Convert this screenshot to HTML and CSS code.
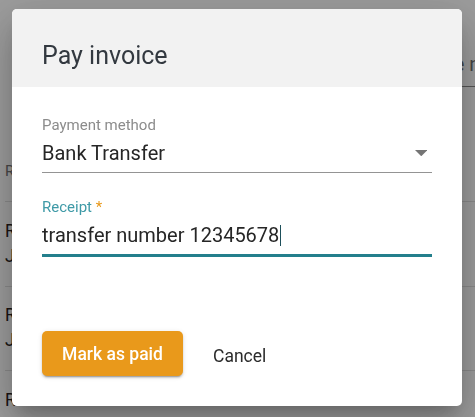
FILE: index.html
```html
<!DOCTYPE html>
<html lang="en">
<head>
<meta charset="utf-8">
<title>Pay invoice</title>
<link rel="stylesheet" href="styles.css">
</head>
<body>
<div class="page">
  <div class="toolbar">
    <div class="search">Invoice number</div>
  </div>
  <div class="table">
    <div class="thead">Reference</div>
    <div class="row">
      <div>R-2024-0012</div>
      <div>Jane Cooper</div>
    </div>
    <div class="row">
      <div>R-2024-0013</div>
      <div>John Miller</div>
    </div>
    <div class="row">
      <div>R-2024-0014</div>
    </div>
  </div>
</div>

<div class="backdrop">
  <div class="dialog" role="dialog" aria-labelledby="dlg-title">
    <div class="dialog-header">
      <h2 class="dialog-title" id="dlg-title">Pay invoice</h2>
    </div>
    <div class="dialog-body">
      <div class="field">
        <div class="field-label">Payment method</div>
        <div class="select">
          <span class="value">Bank Transfer</span>
          <svg class="arrow" viewBox="7 10 10 5" aria-hidden="true"><path d="M7 10l5 5 5-5z"/></svg>
        </div>
      </div>
      <div class="field">
        <div class="field-label focused">Receipt <span class="req">*</span></div>
        <div class="input"><span class="value">transfer number 12345678</span><span class="caret"></span></div>
      </div>
    </div>
    <div class="dialog-actions">
      <button class="btn btn-primary" type="button">Mark as paid</button>
      <button class="btn btn-text" type="button">Cancel</button>
    </div>
  </div>
</div>
</body>
</html>
```

FILE: styles.css
```css
html, body {
  margin: 0;
  height: 100%;
  overflow: hidden;
  background: #ffffff;
  font-family: Roboto, "Liberation Sans", Arial, sans-serif;
}

.page {
  padding-left: 5px;
}

.toolbar {
  padding: 52px 0 0 396px;
}

.search {
  font-size: 20px;
  line-height: 24px;
  color: #6f6f6f;
  white-space: nowrap;
  overflow: hidden;
  padding-bottom: 10px;
  border-bottom: 1px solid #8a8a8a;
}

.table {
  margin-top: 75px;
}

.thead {
  font-size: 15px;
  line-height: 18px;
  color: #757575;
  padding-bottom: 21px;
  border-bottom: 1px solid #e0e0e0;
}

.row {
  padding: 16.5px 0 17px;
  border-bottom: 1px solid #e0e0e0;
  font-size: 17.5px;
  line-height: 25px;
  color: #2a1f1f;
  white-space: nowrap;
}

.backdrop {
  position: fixed;
  inset: 0;
  background: rgba(0, 0, 0, 0.39);
  display: flex;
  align-items: flex-start;
}

.dialog {
  margin: 9px 0 0 12px;
  width: 450px;
  height: 397px;
  background: #ffffff;
  border-radius: 5px;
  overflow: hidden;
  display: flex;
  flex-direction: column;
  box-shadow: 0 11px 15px -7px rgba(0,0,0,.2), 0 24px 38px 3px rgba(0,0,0,.14), 0 9px 46px 8px rgba(0,0,0,.12);
}

.dialog-header {
  background: #f2f2f2;
  padding: 33px 30px 17px;
}

.dialog-title {
  margin: 0;
  font-size: 25px;
  line-height: 28px;
  font-weight: 400;
  color: #333940;
}

.dialog-body {
  padding: 28.5px 30px 0;
}

.field + .field {
  margin-top: 25px;
}

.field-label {
  font-size: 15px;
  line-height: 18px;
  color: #8c8c8c;
}

.field-label.focused {
  color: #3f9aa7;
}

.req {
  color: #e8981a;
}

.value {
  font-size: 20px;
  line-height: 24px;
  color: #262626;
}

.select {
  margin-top: 7.5px;
  padding-bottom: 7px;
  border-bottom: 1px solid #949494;
  display: flex;
  align-items: center;
  justify-content: space-between;
}

.arrow {
  width: 12.5px;
  height: 6.25px;
  margin-right: 5px;
  fill: #757575;
}

.input {
  margin-top: 7px;
  padding-bottom: 7px;
  border-bottom: 3px solid #237f8c;
  line-height: 24px;
  display: flex;
  align-items: center;
}

.caret {
  display: inline-block;
  width: 1px;
  height: 21px;
  margin-left: 1px;
  background: #1d4f5a;
}

.dialog-actions {
  margin-top: auto;
  padding: 0 30px 30px;
  display: flex;
  align-items: center;
}

.btn {
  height: 45px;
  border: 0;
  font-family: Roboto, "Liberation Sans", Arial, sans-serif;
  font-size: 17.5px;
  cursor: pointer;
}

.btn-primary {
  width: 141px;
  padding: 0;
  background: #e9991b;
  color: #ffffff;
  font-weight: 500;
  border-radius: 5px;
  box-shadow: 0 3px 1px -2px rgba(0,0,0,.2), 0 2px 2px 0 rgba(0,0,0,.14), 0 1px 5px 0 rgba(0,0,0,.12);
}

.btn-text {
  margin-left: 10px;
  padding: 4px 20px 0;
  background: transparent;
  color: #2b2b2b;
  font-weight: 400;
}
```
